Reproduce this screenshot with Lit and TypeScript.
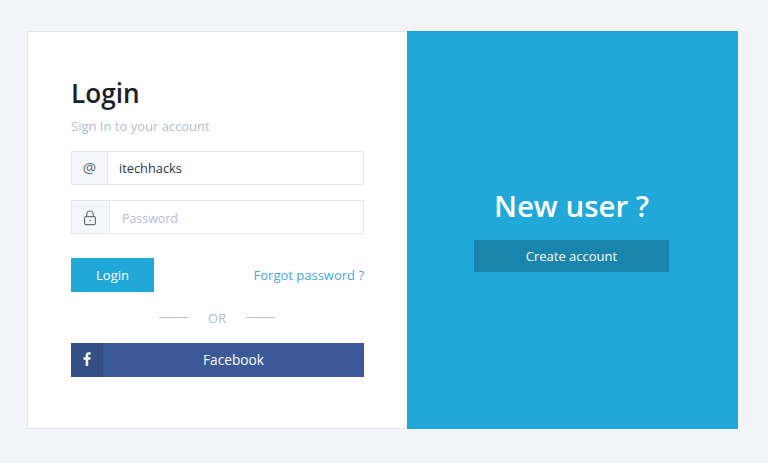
import { LitElement, html, css } from "lit";
import { customElement } from "lit/decorators.js";

@customElement("app-root")
export class AppRoot extends LitElement {
  static styles = css`
    :host {
      display: block;
      width: 768px;
      height: 463px;
      background: #f2f4f9;
      font-family: "Open Sans", "Noto Sans", sans-serif;
      overflow: hidden;
    }
    * { box-sizing: border-box; }
    .page { display: flex; padding: 31px 30px 34px 27px; height: 463px; }
    .left {
      width: 380px;
      background: #fff;
      border: 1px solid #e4e7ee;
      border-right: 0;
      padding: 42px 43px 0 43px;
      display: flex;
      flex-direction: column;
    }
    h1 { margin: 0; font-size: 26.2px; line-height: 38px; font-weight: 600; color: #1b1f28; }
    .sub { margin-top: 5px; font-size: 13px; line-height: 18px; color: #b4bcd8; }
    .group {
      display: flex;
      height: 34px;
      border: 1px solid #e4e7ee;
      margin-top: 15px;
      font-size: 13px;
    }
    .group.first { margin-top: 16px; }
    .addon {
      background: #f5f6f9;
      border-right: 1px solid #e4e7ee;
      display: flex;
      align-items: center;
      justify-content: center;
      color: #5c6873;
      flex: none;
    }
    .a1 { width: 36px; padding-bottom: 3px; font-size: 15px; }
    .a2 { width: 38px; padding: 2px 2px 0 0; }
    .value { padding-left: 11px; line-height: 32px; color: #2c3442; font-size: 12.8px; }
    .ph { color: #b4bcd8; padding: 2px 0 0 12px; font-size: 12.4px; }
    .actions { display: flex; align-items: center; justify-content: space-between; margin-top: 24px; }
    .btn {
      width: 83px;
      height: 34px;
      background: #20a8d8;
      color: #fff;
      font-size: 13px;
      display: flex;
      align-items: center;
      justify-content: center;
    }
    .forgot { color: #4aa8dc; font-size: 13px; }
    .or {
      display: flex;
      align-items: center;
      justify-content: center;
      gap: 20px;
      margin-top: 17px;
      height: 18px;
      padding-right: 1px;
      color: #b4bcd8;
      font-size: 13px;
    }
    .or i { display: block; width: 29px; height: 1px; background: #b4bcd8; margin-top: -1px; }
    .fb {
      display: flex;
      height: 34px;
      margin-top: 16px;
      background: #3b5998;
      color: #fff;
    }
    .fb-icon {
      width: 32px;
      background: #344e86;
      display: flex;
      align-items: center;
      justify-content: center;
      flex: none;
      padding-bottom: 2px;
    }
    .fb-label { flex: 1; text-align: center; font-size: 13.7px; line-height: 34px; }
    .right {
      width: 331px;
      background: #20a8d8;
      display: flex;
      flex-direction: column;
      align-items: center;
      padding: 153px 2px 0 0;
      color: #fff;
    }
    h2 { margin: 0; font-size: 29.4px; line-height: 44px; font-weight: 600; }
    .create {
      margin-top: 12px;
      width: 195px;
      height: 32px;
      background: #1985ac;
      font-size: 13px;
      display: flex;
      align-items: center;
      justify-content: center;
    }
  `;

  render() {
    return html`
      <div class="page">
        <div class="left">
          <h1>Login</h1>
          <div class="sub">Sign In to your account</div>
          <div class="group first">
            <div class="addon a1">@</div>
            <div class="value">itechhacks</div>
          </div>
          <div class="group">
            <div class="addon a2">
              <svg width="14" height="16" viewBox="0 0 14 16" fill="none" stroke="#6a7480" stroke-width="1.2">
                <rect x="1.6" y="6.6" width="10.8" height="8" rx="1.2"></rect>
                <path d="M3.8 6.6V4.2a3.2 3.2 0 0 1 6.4 0v2.4"></path>
                <circle cx="7" cy="10.6" r="0.8" fill="#6a7480" stroke="none"></circle>
              </svg>
            </div>
            <div class="value ph">Password</div>
          </div>
          <div class="actions">
            <div class="btn">Login</div>
            <div class="forgot">Forgot password ?</div>
          </div>
          <div class="or"><i></i><span>OR</span><i></i></div>
          <div class="fb">
            <div class="fb-icon">
              <svg width="8" height="14" viewBox="0 0 8 14" fill="#fff">
                <path d="M5.2 14V7.7h2.1l.3-2.4H5.2V3.8c0-.7.2-1.2 1.2-1.2h1.3V.4C7.4.4 6.7.3 5.8.3 4 .3 2.7 1.4 2.7 3.5v1.8H.5v2.4h2.2V14z"></path>
              </svg>
            </div>
            <div class="fb-label">Facebook</div>
          </div>
        </div>
        <div class="right">
          <h2>New user ?</h2>
          <div class="create">Create account</div>
        </div>
      </div>
    `;
  }
}
